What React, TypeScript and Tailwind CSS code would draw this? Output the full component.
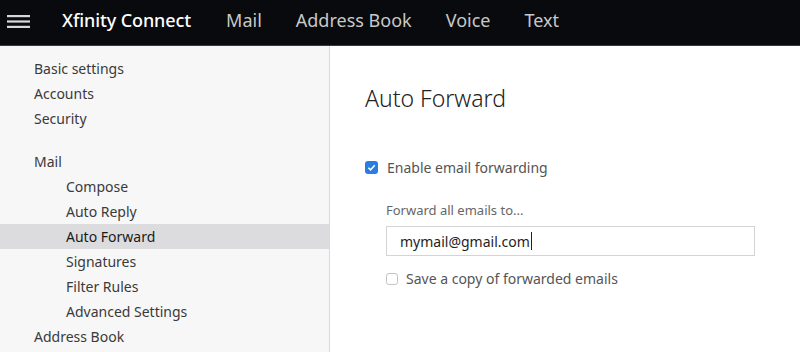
import React from "react";

const font = { fontFamily: '"Noto Sans", "Open Sans", Arial, sans-serif' };

function Hamburger() {
  return (
    <svg width="23" height="13" viewBox="0 0 23 13" className="block">
      <rect x="0" y="0" width="23" height="2.2" fill="#d8d8d8" />
      <rect x="0" y="5.4" width="23" height="2.2" fill="#d8d8d8" />
      <rect x="0" y="10.8" width="23" height="2.2" fill="#d8d8d8" />
    </svg>
  );
}

function SideItem({ label, sub, active }: { label: string; sub?: boolean; active?: boolean }) {
  return (
    <div
      className={`h-[25px] flex items-center text-[14px] ${sub ? "pl-[66px]" : "pl-[34px]"} ${
        active ? "bg-[#dcdcdf] text-[#1a1a1a]" : "text-[#3a3a3a]"
      }`}
    >
      {label}
    </div>
  );
}

export default function App() {
  return (
    <div className="w-[800px] h-[352px] overflow-hidden bg-white flex flex-col" style={font}>
      <header className="h-[46px] shrink-0 bg-[#080a0d] border-b border-[#3a3a3a] flex items-center pb-[5px]">
        <div className="pl-[7px] pr-[32px] pt-[3px]">
          <Hamburger />
        </div>
        <div className="text-white text-[18px] font-medium tracking-[-0.1px]">Xfinity Connect</div>
        <nav className="flex items-center text-[18px] text-[#c8c8c8] ml-[35px] gap-[34px]">
          <span>Mail</span>
          <span>Address Book</span>
          <span>Voice</span>
          <span>Text</span>
        </nav>
      </header>
      <div className="flex flex-1 min-h-0">
        <aside className="w-[330px] shrink-0 bg-[#f7f7f7] border-r border-[#dadada] pt-[10px]">
          <SideItem label="Basic settings" />
          <SideItem label="Accounts" />
          <SideItem label="Security" />
          <div className="h-[18px]" />
          <SideItem label="Mail" />
          <SideItem label="Compose" sub />
          <SideItem label="Auto Reply" sub />
          <SideItem label="Auto Forward" sub active />
          <SideItem label="Signatures" sub />
          <SideItem label="Filter Rules" sub />
          <SideItem label="Advanced Settings" sub />
          <SideItem label="Address Book" />
        </aside>
        <main className="flex-1 pl-[35px] pt-[36px]">
          <h1 className="text-[23px] font-light text-[#222] leading-[32px]">Auto Forward</h1>
          <label className="flex items-center mt-[44px] text-[14px] text-[#555] leading-[19px]">
            <span className="w-[13px] h-[13px] rounded-[3px] bg-[#2a7ce0] flex items-center justify-center mr-[9px]">
              <svg width="9" height="9" viewBox="0 0 10 10">
                <path d="M1.5 5.2 L4 7.6 L8.6 2.4" stroke="white" strokeWidth="1.7" fill="none" />
              </svg>
            </span>
            Enable email forwarding
          </label>
          <div className="pl-[21px] mt-[24px]">
            <div className="text-[13px] text-[#666] leading-[18px]">Forward all emails to...</div>
            <div className="mt-[7px] w-[369px] h-[30px] border border-[#d4d4d4] flex items-center pl-[13px] text-[14px] text-[#1e1e1e]">
              mymail@gmail.com<span className="inline-block w-px h-[18px] bg-[#222] ml-px" />
            </div>
            <label className="flex items-center mt-[13px] text-[14px] text-[#555] leading-[19px]">
              <span className="w-[12px] h-[12px] rounded-[3px] border border-[#c4c4c4] bg-white mr-[8px]" />
              Save a copy of forwarded emails
            </label>
          </div>
        </main>
      </div>
    </div>
  );
}
